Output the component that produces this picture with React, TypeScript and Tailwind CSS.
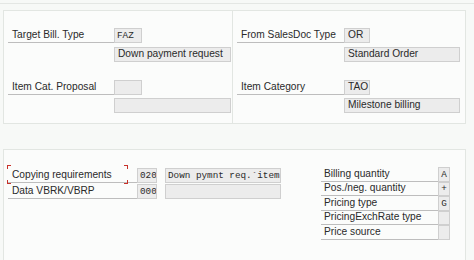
import React from "react";

const sans = { fontFamily: '"Liberation Sans", Arial, sans-serif' };

function Box({ w, text, mono }: { w: string; text?: string; mono?: boolean }) {
  return (
    <div
      className={`${w} h-[15px] shrink-0 bg-[#ececec] border border-[#cfcfcf] flex items-center whitespace-nowrap overflow-hidden text-[#2a2a2a] leading-none ${
        mono ? "px-[2px] text-[9.3px] font-['Liberation_Mono',monospace]" : "px-[3px] text-[10.2px]"
      }`}
    >
      {text}
    </div>
  );
}

function Label({ w, text }: { w: string; text: string }) {
  return (
    <div className={`${w} h-[15px] shrink-0 border-b border-[#bdbdbd] flex items-center pl-[4px] text-[10.2px] text-[#2a2a2a] leading-none whitespace-nowrap`}>
      {text}
    </div>
  );
}

function Corner({ pos }: { pos: string }) {
  return <span className={`absolute w-[4px] h-[4px] border-[#c8322a] ${pos}`} />;
}

export default function App() {
  return (
    <div className="w-[474px] h-[260px] overflow-hidden bg-[#f7f9f7] pt-[3px]" style={sans}>
      <div className="border-t border-[#e4e7e4] pt-[6px] pl-[3px]">
        <div className="flex w-[463px] h-[114px]">
          {/* left panel */}
          <div className="w-[230px] h-full border border-[#e2e6e2] bg-[#fbfcfb] pt-[17px] pl-[4px]">
            <div className="flex">
              <Label w="w-[106px]" text="Target Bill. Type" />
              <Box w="w-[28px]" text="FAZ" mono />
            </div>
            <div className="flex mt-[4px] pl-[106px]">
              <Box w="w-[117px]" text="Down payment request" />
            </div>
            <div className="flex mt-[18px]">
              <Label w="w-[106px]" text="Item Cat. Proposal" />
              <Box w="w-[28px]" />
            </div>
            <div className="flex mt-[3px] pl-[106px]">
              <Box w="w-[117px]" />
            </div>
          </div>
          {/* right panel */}
          <div className="w-[233px] h-full border-y border-r border-[#e2e6e2] bg-[#fbfcfb] pt-[17px] pl-[4px]">
            <div className="flex">
              <Label w="w-[107px]" text="From SalesDoc Type" />
              <Box w="w-[26px]" text="OR" />
            </div>
            <div className="flex mt-[4px] pl-[107px]">
              <Box w="w-[116px]" text="Standard Order" />
            </div>
            <div className="flex mt-[18px]">
              <Label w="w-[107px]" text="Item Category" />
              <Box w="w-[26px]" text="TAO" />
            </div>
            <div className="flex mt-[3px] pl-[107px]">
              <Box w="w-[116px]" text="Milestone billing" />
            </div>
          </div>
        </div>

        {/* bottom panel */}
        <div className="mt-[25px] w-[463px] h-[120px] border border-[#e2e6e2] bg-[#fbfcfb] pt-[18px] pl-[4px] flex">
          <div className="w-[277px] flex flex-col gap-[1px]">
            <div className="flex">
              <div className="relative">
                <Label w="w-[129px]" text="Copying requirements" />
                <Corner pos="left-[-1px] top-[-3px] border-l border-t" />
                <Corner pos="left-[-1px] bottom-[-1px] border-l border-b" />
                <Corner pos="left-[116px] top-[-3px] border-r border-t" />
                <Corner pos="left-[116px] bottom-[-1px] border-r border-b" />
              </div>
              <Box w="w-[20px]" text="020" mono />
              <div className="w-[8px] shrink-0" />
              <Box w="w-[116px]" text="Down pymnt req.´item" mono />
            </div>
            <div className="flex">
              <Label w="w-[129px]" text="Data VBRK/VBRP" />
              <Box w="w-[20px]" text="000" mono />
              <div className="w-[8px] shrink-0" />
              <Box w="w-[116px]" />
            </div>
          </div>
          <div className="ml-[36px] -mt-[1px] flex flex-col">
            {[
              ["Billing quantity", "A"],
              ["Pos./neg. quantity", "+"],
              ["Pricing type", "G"],
              ["PricingExchRate type", ""],
              ["Price source", ""],
            ].map(([l, v]) => (
              <div key={l} className="flex h-[14.6px]">
                <div className="w-[117px] h-full border-b border-[#bdbdbd] flex items-center pl-[3px] text-[10.2px] text-[#2a2a2a] leading-none whitespace-nowrap">
                  {l}
                </div>
                <div className="w-[12px] h-full bg-[#ececec] border border-[#cfcfcf] flex items-center justify-center text-[9.3px] text-[#2a2a2a] leading-none font-['Liberation_Mono',monospace]">
                  {v}
                </div>
              </div>
            ))}
          </div>
        </div>
      </div>
    </div>
  );
}
